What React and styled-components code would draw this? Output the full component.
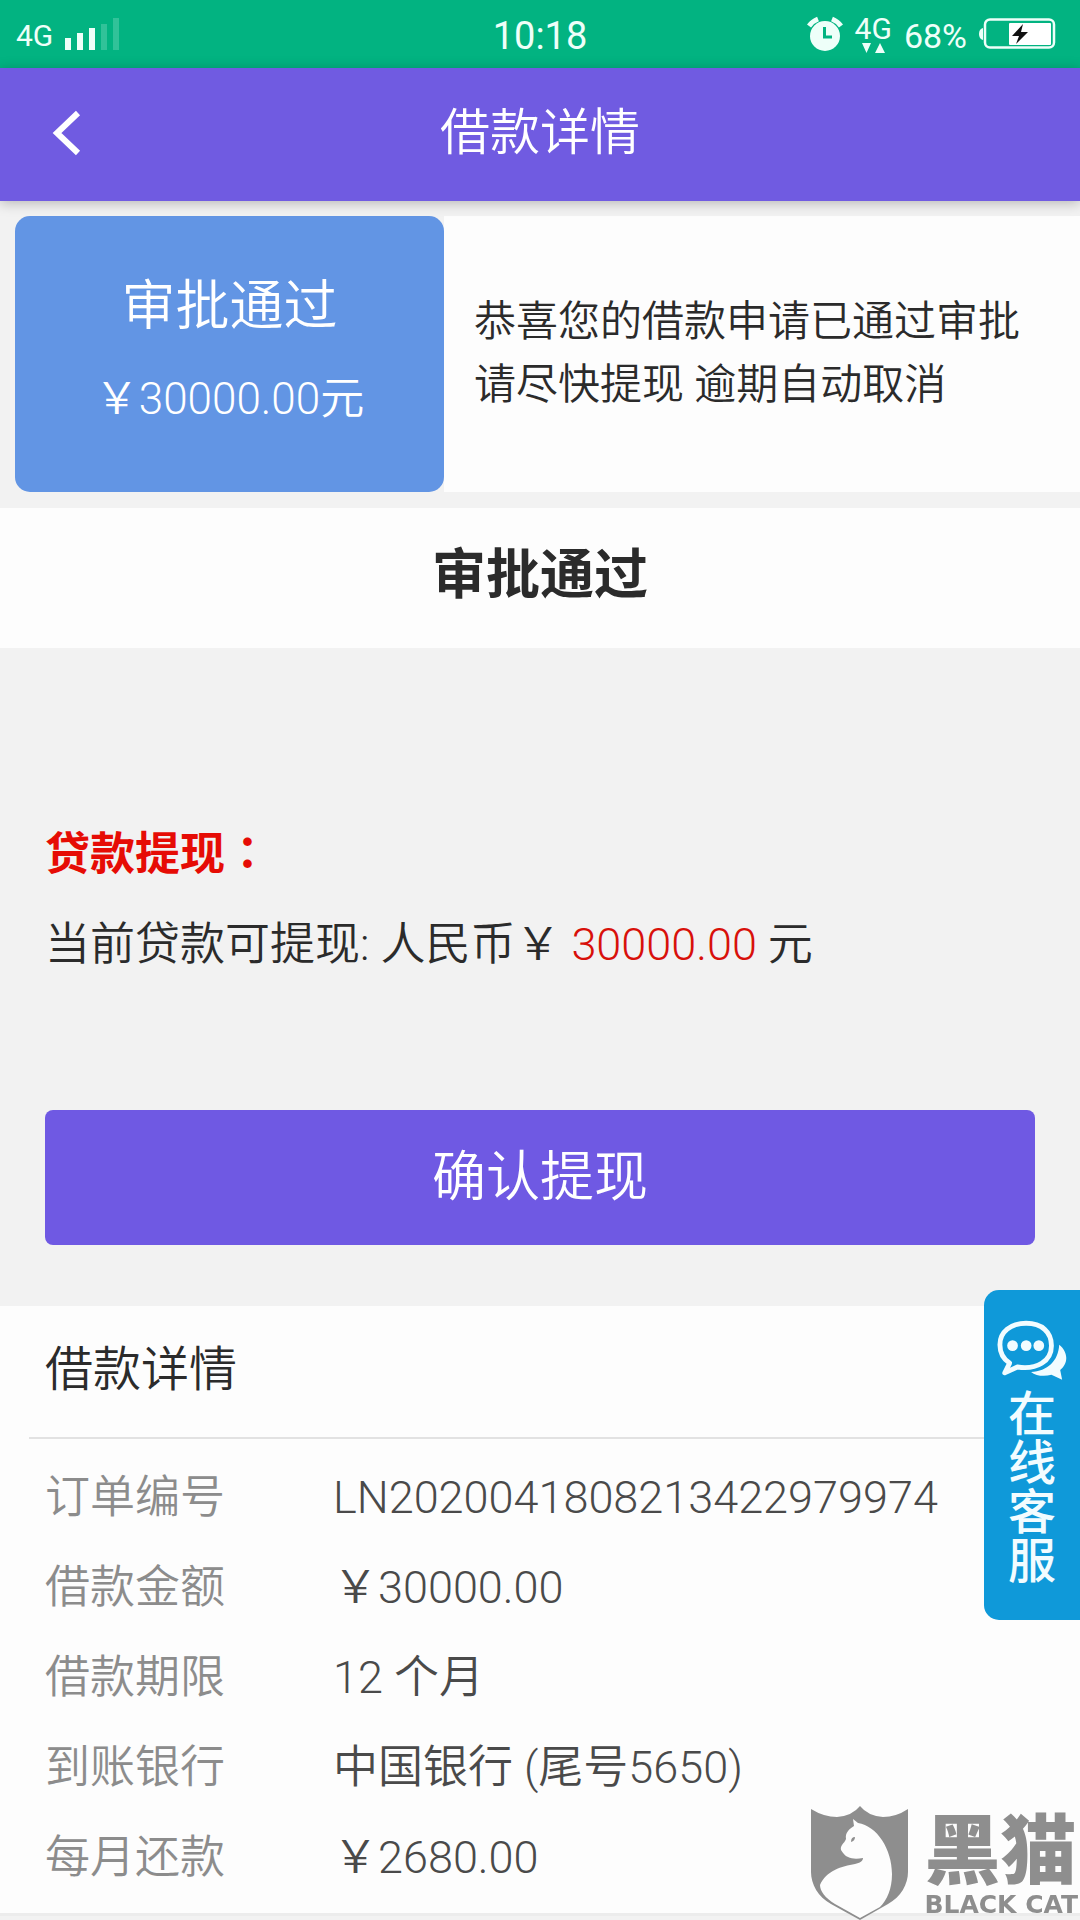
import styled, { createGlobalStyle } from "styled-components";

const GlobalStyle = createGlobalStyle`
  * {
    box-sizing: border-box;
  }
  body {
    margin: 0;
    background: #f2f2f2;
    color: #2b2b2b;
    font-family: Roboto, "Noto Sans CJK SC", sans-serif;
    font-weight: 350;
  }
  h1, h2, h3, p, dl, dd {
    margin: 0;
  }
`;

const StatusBar = styled.div`
  display: grid;
  grid-template-columns: 1fr auto 1fr;
  align-items: center;
  height: 68px;
  padding: 0 16px;
  background: #02b381;
  color: #eefff9;
`;

const StatusGroup = styled.div`
  display: flex;
  align-items: center;
  justify-content: ${(props) => (props.$end ? "flex-end" : "flex-start")};
  gap: 12px;
  padding-right: ${(props) => (props.$end ? "8px" : "0")};
`;

const StatusText = styled.span`
  padding-top: 4px;
  font-size: ${(props) => props.$size}px;
  font-weight: 400;
  line-height: 40px;
`;

const Network = styled.span`
  display: flex;
  flex-direction: column;
  align-items: center;
  font-size: 30px;
  font-weight: 400;
  line-height: 28px;
`;

const Header = styled.header`
  position: relative;
  display: grid;
  grid-template-columns: 132px 1fr 132px;
  align-items: center;
  height: 133px;
  padding-bottom: 4px;
  background: #705be1;
  color: #fff;
  box-shadow: 0 2px 12px rgba(0, 0, 0, 0.25);
`;

const BackButton = styled.button`
  display: flex;
  justify-content: center;
  padding: 0;
  border: none;
  background: none;
  color: inherit;
  cursor: pointer;
`;

const Title = styled.h1`
  font-size: 50px;
  font-weight: 350;
  line-height: 72px;
  text-align: center;
`;

const Summary = styled.section`
  display: flex;
  padding: 15px 0 16px 15px;
`;

const Card = styled.div`
  display: flex;
  flex: 0 0 429px;
  flex-direction: column;
  align-items: center;
  height: 276px;
  padding-top: 51px;
  border-radius: 15px;
  background: #6295e4;
  color: #fff;
`;

const CardStatus = styled.p`
  font-size: 54px;
  line-height: 80px;
`;

const CardAmount = styled.p`
  margin-top: 20px;
  font-size: 44px;
  line-height: 64px;
`;

const Message = styled.p`
  display: flex;
  flex: 1;
  flex-direction: column;
  justify-content: center;
  padding: 0 0 2px 30px;
  background: #fdfdfd;
  font-size: 42px;
  line-height: 63px;
`;

const StatusTitle = styled.h2`
  height: 140px;
  background: #fdfdfd;
  font-size: 54px;
  font-weight: 700;
  line-height: 136px;
  text-align: center;
`;

const Withdraw = styled.section`
  padding: 175px 45px 61px;
`;

const WithdrawTitle = styled.h3`
  color: #e60c05;
  font-size: 45px;
  font-weight: 700;
  line-height: 64px;
`;

// the TC face centres the full-width colon in its box
const Colon = styled.span`
  font-family: "Noto Sans CJK TC", sans-serif;
  line-height: 40px;
`;

const WithdrawText = styled.p`
  margin-top: 26px;
  font-size: 45px;
  line-height: 64px;
`;

const Amount = styled.span`
  color: #d8100a;
`;

const SubmitButton = styled.button`
  display: block;
  width: 100%;
  height: 135px;
  margin-top: 133px;
  padding: 0 0 10px;
  border: none;
  border-radius: 8px;
  background: #6f59e3;
  color: #fff;
  font: inherit;
  font-size: 54px;
  cursor: pointer;
`;

const Details = styled.section`
  padding-bottom: 10px;
  border-bottom: 3px solid #ececec;
  background: #fdfdfd;
`;

const DetailsTitle = styled.h3`
  height: 133px;
  margin-left: 29px;
  padding-left: 16px;
  border-bottom: 2px solid #e2e2e2;
  font-size: 48px;
  font-weight: 350;
  line-height: 128px;
`;

const DetailList = styled.dl`
  padding: 14px 45px 0;
`;

const DetailRow = styled.div`
  display: flex;
  height: 90px;
  font-size: 45px;
  line-height: 90px;
`;

const Label = styled.dt`
  flex: 0 0 288px;
  color: #8c8c8c;
`;

const Value = styled.dd`
  color: #4a4a4a;
  white-space: nowrap;
`;

const ServiceLink = styled.a`
  position: fixed;
  right: 0;
  bottom: 300px;
  display: flex;
  flex-direction: column;
  align-items: center;
  width: 96px;
  height: 330px;
  padding-top: 30px;
  border-radius: 15px 0 0 15px;
  background: #0f99d9;
  color: #f2fcff;
  text-decoration: none;
`;

const ServiceText = styled.span`
  width: 48px;
  margin-top: 9px;
  font-size: 48px;
  font-weight: 500;
  line-height: 49px;
`;

const Watermark = styled.div`
  position: fixed;
  right: 0;
  bottom: 0;
  display: flex;
  align-items: flex-end;
  gap: 15px;
  padding-right: 2px;
  color: #8e8e8e;
`;

const WatermarkText = styled.div`
  display: flex;
  flex-direction: column;
`;

const WatermarkName = styled.span`
  font-size: 76px;
  font-weight: 900;
  line-height: 76px;
`;

const WatermarkLatin = styled.span`
  font-family: "DejaVu Sans", sans-serif;
  font-size: 25px;
  font-weight: 700;
  line-height: 30px;
`;

const details = [
  { label: "订单编号", value: "LN2020041808213422979974" },
  { label: "借款金额", value: "￥30000.00" },
  { label: "借款期限", value: "12 个月" },
  { label: "到账银行", value: "中国银行 (尾号5650)" },
  { label: "每月还款", value: "￥2680.00" },
];

const SignalIcon = () => (
  <svg width="56" height="34" viewBox="0 0 56 34" fill="currentColor">
    <rect x="0" y="21" width="6" height="12" />
    <rect x="12" y="16" width="6" height="17" />
    <rect x="24" y="11" width="6" height="22" />
    <rect x="36" y="7" width="6" height="26" opacity="0.2" />
    <rect x="48" y="1" width="6" height="32" opacity="0.2" />
  </svg>
);

const AlarmIcon = () => (
  <svg width="36" height="36" viewBox="0 0 36 36" fill="none" stroke="currentColor">
    <circle cx="18" cy="20" r="15" fill="currentColor" stroke="none" />
    <path d="M2 10A20 20 0 0 1 11 3M25 3A20 20 0 0 1 34 10" strokeWidth="5" />
    <path d="M17.5 11V21H25" stroke="#02b381" strokeWidth="3" />
  </svg>
);

const BatteryIcon = () => (
  <svg width="77" height="32" viewBox="0 0 77 32">
    <path d="M4 10Q0 11 0 16T4 22Z" fill="#eefff9" />
    <rect x="6" y="1.5" width="69" height="28" rx="5" fill="none" stroke="#eefff9" strokeWidth="2.5" />
    <rect x="30" y="5" width="42" height="22" rx="1" fill="#fff" />
    <path d="M44 6L33 18H40L37 26L49 14H42Z" fill="#111" />
  </svg>
);

const ChatIcon = () => (
  <svg width="70" height="61" viewBox="0 0 72 62">
    <path
      d="M64 25C74 33 73 45 65 51L67 61L56 56C48 58 40 57 35 53C52 52 63 42 64 25Z"
      fill="currentColor"
    />
    <path
      d="M30 3C14 3 3 12 3 25C3 34 7 40 13 44L8 54L21 48C41 51 56 42 56 26C56 12 46 3 30 3Z"
      fill="none"
      stroke="currentColor"
      strokeWidth="5"
      strokeLinejoin="round"
    />
    <circle cx="16" cy="26" r="5.5" fill="currentColor" />
    <circle cx="30" cy="26" r="5.5" fill="currentColor" />
    <circle cx="43" cy="26" r="5.5" fill="currentColor" />
  </svg>
);

const CatShield = () => (
  <svg width="98" height="114" viewBox="0 0 98 114">
    <path
      d="M0 3Q13 11 26 11Q41 10 49 0Q57 10 72 11Q85 11 97 3V66C97 78 90 91 77 98L49 114L20 98C7 91 0 78 0 66Z"
      fill="#8e8e8e"
    />
    <path
      d="M42 13L47 17C66 20 81 43 81 68C81 83 76 94 69 101L49 112L24 98C14 92 9 85 9 79C15 65 31 60 44 58C49 57 52 55 52 52C46 53 41 53 37 51C34 50 32 47 30 44C29 39 33 38 35 33C34 27 38 23 43 20Z"
      fill="#fdfdfd"
    />
    <path d="M40 36Q40 31 44 31Q44 35 40 36Z" fill="#8e8e8e" />
  </svg>
);

const App = () => {
  return (
    <>
      <GlobalStyle />
      <StatusBar>
        <StatusGroup>
          <StatusText $size={30}>4G</StatusText>
          <SignalIcon />
        </StatusGroup>
        <StatusText $size={38}>10:18</StatusText>
        <StatusGroup $end>
          <AlarmIcon />
          <Network>
            4G
            <svg width="24" height="10" viewBox="0 0 24 10" fill="currentColor">
              <path d="M1 0H10L5.500 10ZM14 10H24L19 0Z" />
            </svg>
          </Network>
          <StatusText $size={34}>68%</StatusText>
          <BatteryIcon />
        </StatusGroup>
      </StatusBar>
      <Header>
        <BackButton aria-label="返回">
          <svg width="30" height="46" viewBox="0 0 30 46" fill="none" stroke="currentColor" strokeWidth="6">
            <path d="M27 3L6 23L27 43" />
          </svg>
        </BackButton>
        <Title>借款详情</Title>
      </Header>
      <main>
        <Summary>
          <Card>
            <CardStatus>审批通过</CardStatus>
            <CardAmount>￥30000.00元</CardAmount>
          </Card>
          <Message>
            <span>恭喜您的借款申请已通过审批</span>
            <span>请尽快提现 逾期自动取消</span>
          </Message>
        </Summary>
        <StatusTitle>审批通过</StatusTitle>
        <Withdraw>
          <WithdrawTitle>
            贷款提现<Colon>：</Colon>
          </WithdrawTitle>
          <WithdrawText>
            当前贷款可提现: 人民币￥ <Amount>30000.00</Amount> 元
          </WithdrawText>
          <SubmitButton>确认提现</SubmitButton>
        </Withdraw>
        <Details>
          <DetailsTitle>借款详情</DetailsTitle>
          <DetailList>
            {details.map((item) => (
              <DetailRow key={item.label}>
                <Label>{item.label}</Label>
                <Value>{item.value}</Value>
              </DetailRow>
            ))}
          </DetailList>
        </Details>
      </main>
      <ServiceLink href="#service">
        <ChatIcon />
        <ServiceText>在线客服</ServiceText>
      </ServiceLink>
      <Watermark>
        <CatShield />
        <WatermarkText>
          <WatermarkName>黑猫</WatermarkName>
          <WatermarkLatin>BLACK CAT</WatermarkLatin>
        </WatermarkText>
      </Watermark>
    </>
  );
};

export default App;
